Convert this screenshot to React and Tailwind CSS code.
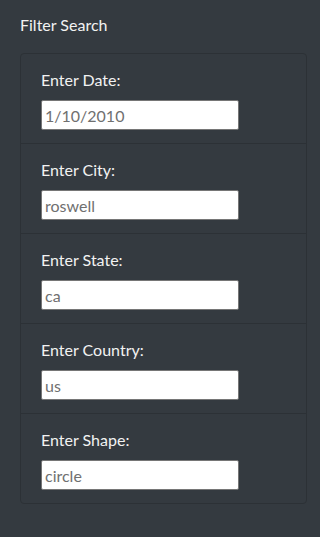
import React from 'react';

const fields = [
  { label: 'Enter Date:', value: '1/10/2010' },
  { label: 'Enter City:', value: 'roswell' },
  { label: 'Enter State:', value: 'ca' },
  { label: 'Enter Country:', value: 'us' },
  { label: 'Enter Shape:', value: 'circle' },
];

const App = () => {
  return (
    <div
      className="min-h-[537px] bg-[#343a40] px-5 pt-[13px] pb-8 text-[#f2f2f2]"
      style={{ fontFamily: 'Lato, "Open Sans", sans-serif' }}
    >
      <h2 className="text-[16px] leading-6 mb-4">Filter Search</h2>
      <ul className="w-[287px] rounded border border-[#2c3136] bg-[#343a40]">
        {fields.map((f, i) => (
          <li
            key={f.label}
            className={`px-5 pt-[14px] pb-[13px] ${i > 0 ? 'border-t border-[#2c3136]' : ''}`}
          >
            <label className="block text-[16px] leading-6 mb-2">{f.label}</label>
            <input
              type="text"
              defaultValue={f.value}
              className="block w-[198px] h-[30px] rounded-[2px] border border-[#767676] bg-white px-[3px] text-[16px] text-[#707070] outline-none"
              style={{ fontFamily: 'Lato, "Open Sans", sans-serif' }}
            />
          </li>
        ))}
      </ul>
    </div>
  );
};

export default App;
